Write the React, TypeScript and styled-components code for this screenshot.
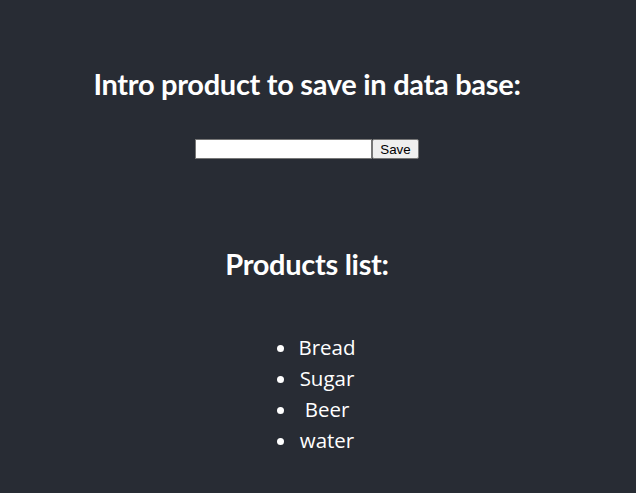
import React, { useState } from 'react';
import styled, { createGlobalStyle } from "styled-components";

const GlobalStyle = createGlobalStyle`
  html, body {
    margin: 0;
    padding: 0;
    background-color: #282c34;
  }
`

const initialProducts = ['Bread', 'Sugar', 'Beer', 'water']

export default function App() {
    const [products, setProducts] = useState<string[]>(initialProducts)
    const [value, setValue] = useState('')

    const save = () => {
        if (!value.trim()) return
        setProducts([...products, value.trim()])
        setValue('')
    }

    return (
        <>
            <GlobalStyle/>
            <Header>
                <Title>Intro product to save in data base:</Title>
                <Form>
                    <Input value={value} onChange={e => setValue(e.target.value)}/>
                    <Button onClick={save}>Save</Button>
                </Form>
                <ListTitle>Products list:</ListTitle>
                <List>
                    {products.map((p, i) => <Item key={i}>{p}</Item>)}
                </List>
            </Header>
        </>
    );
}

const Header = styled.div`
  width: 614px;
  min-height: 493px;
  box-sizing: border-box;
  padding-top: 64px;
  display: flex;
  flex-direction: column;
  align-items: center;
  color: #ffffff;
  font-family: "Open Sans", "Noto Sans", sans-serif;
  font-size: 20px;
`
const Title = styled.h2`
  margin: 0;
  font-family: Lato, "Open Sans", sans-serif;
  font-size: 29px;
  font-weight: 700;
  letter-spacing: -0.3px;
  line-height: 40px;
`
const Form = styled.div`
  display: flex;
  margin-top: 35px;
`
const Input = styled.input`
  box-sizing: border-box;
  width: 177px;
  height: 20px;
  margin: 0;
  padding: 1px 2px;
  border: 1px solid #767676;
  border-radius: 0;
  background: #ffffff;
  font-family: "Liberation Sans", Arial, sans-serif;
  font-size: 13.33px;
`
const Button = styled.button`
  box-sizing: border-box;
  width: 47px;
  height: 20px;
  margin: 0;
  padding: 0;
  border: 1px solid #767676;
  border-radius: 2px;
  background: #efefef;
  color: #000000;
  font-family: "Liberation Sans", Arial, sans-serif;
  font-size: 13.33px;
`
const ListTitle = styled(Title)`
  margin-top: 85px;
`
const List = styled.ul`
  margin: 48px 0 0;
  padding-left: 40px;
  list-style: disc;
`
const Item = styled.li`
  text-align: center;
  line-height: 31px;
  font-size: 20.5px;
`
